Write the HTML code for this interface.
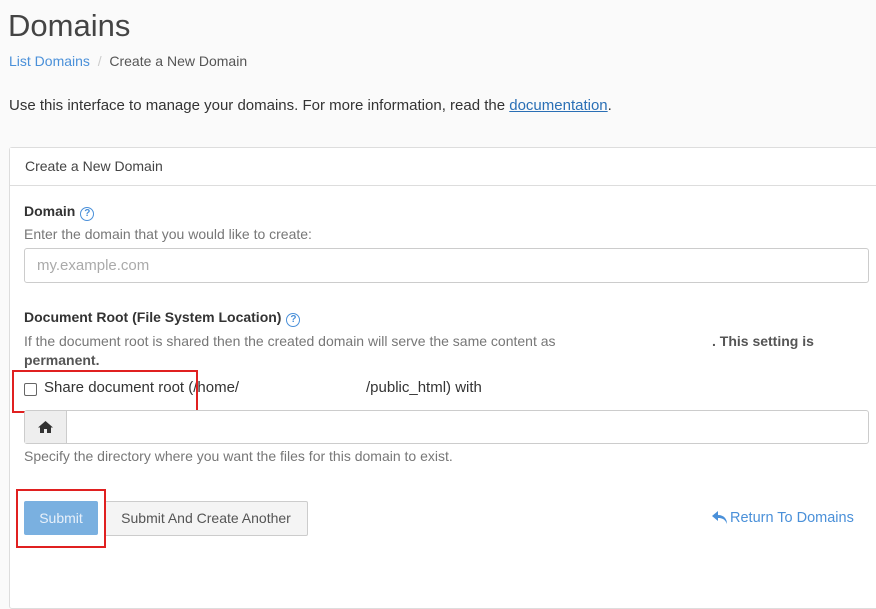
<!DOCTYPE html>
<html><head><style>
body{margin:0;width:876px;height:565px;overflow:hidden;background:#fafafa;font-family:"Liberation Sans",sans-serif;color:#333;position:relative}
.a{position:absolute;white-space:nowrap}
.panel{position:absolute;left:9px;top:147px;width:880px;height:460px;background:#fff;border:1px solid #ddd;border-radius:3px}
.ph{position:absolute;left:0;top:0;right:0;height:37px;background:#fff;border-bottom:1px solid #ddd}
.inp{position:absolute;background:#fff;border:1px solid #ccc;border-radius:3px}
.q{display:inline-block;width:12px;height:12px;border:1.3px solid #4a90d9;border-radius:50%;color:#4a90d9;font-size:10px;line-height:12px;text-align:center;font-weight:bold;vertical-align:0px;margin-left:5px}
</style></head><body>
<div class="a" style="left:8px;top:8px;font-size:31px;color:#444">Domains</div>
<div class="a" style="left:9px;top:53px;font-size:14px"><span style="color:#4a90d9">List Domains</span><span style="color:#ccc"> &nbsp;/&nbsp; </span><span style="color:#555">Create a New Domain</span></div>
<div class="a" style="left:9px;top:97px;font-size:15px;color:#333">Use this interface to manage your domains. For more information, read the <span style="color:#2a6fb5;text-decoration:underline">documentation</span>.</div>
<div class="panel"><div class="ph"><div class="a" style="left:15px;top:10px;font-size:14px;color:#444">Create a New Domain</div></div></div>
<div class="a" style="left:24px;top:203px;font-size:14px;font-weight:bold">Domain<span class="q">?</span></div>
<div class="a" style="left:24px;top:226px;font-size:14px;color:#777">Enter the domain that you would like to create:</div>
<div class="inp" style="left:24px;top:248px;width:843px;height:33px"><div class="a" style="left:12px;top:8px;font-size:15px;color:#aaa">my.example.com</div></div>
<div class="a" style="left:24px;top:309px;font-size:14px;font-weight:bold">Document Root (File System Location)<span class="q">?</span></div>
<div class="a" style="left:24px;top:333px;font-size:14px;color:#777">If the document root is shared then the created domain will serve the same content as</div>
<div class="a" style="left:712px;top:333px;font-size:14px;color:#555"><b>. This setting is</b></div>
<div class="a" style="left:24px;top:352px;font-size:14px;color:#555;font-weight:bold">permanent.</div>
<div class="a" style="left:24px;top:383px;width:11px;height:11px;border:1px solid #666;border-radius:2px;background:#fff"></div>
<div class="a" style="left:44px;top:379px;font-size:15px;color:#333">Share document root (/home/</div>
<div class="a" style="left:366px;top:379px;font-size:15px;color:#333">/public_html) with</div>
<div class="a" style="left:12px;top:370px;width:182px;height:39px;border:2px solid #e02020"></div>
<div class="inp" style="left:24px;top:410px;width:843px;height:32px"><div class="a" style="left:0;top:0;width:41px;height:32px;background:#eee;border-right:1px solid #ccc"></div>
<svg class="a" style="left:13px;top:10px" width="15" height="12" viewBox="0 0 15 12"><path d="M7.5 0L0 6.5h2V12h4V8h3v4h4V6.5h2z" fill="#333"/></svg></div>
<div class="a" style="left:24px;top:448px;font-size:14px;color:#777">Specify the directory where you want the files for this domain to exist.</div>
<div class="a" style="left:24px;top:501px;width:74px;height:34px;background:#7ab0e0;border-radius:2px;color:#e8f0fa;font-size:14px;line-height:34px;text-align:center">Submit</div>
<div class="a" style="left:104px;top:501px;width:202px;height:33px;background:#f4f4f4;border:1px solid #ccc;border-radius:2px;color:#555;font-size:14px;line-height:33px;text-align:center">Submit And Create Another</div>
<div class="a" style="left:16px;top:489px;width:86px;height:55px;border:2px solid #e02020"></div>
<svg class="a" style="left:712px;top:511px" width="15" height="14" viewBox="0 0 15 14"><path d="M6 0L0 5l6 5V7c4 0 7 1 9 6 0-5-3-9-9-9z" fill="#4a90d9"/></svg>
<div class="a" style="left:730px;top:510px;font-size:14.5px;color:#4a90d9">Return To Domains</div>
</body></html>
